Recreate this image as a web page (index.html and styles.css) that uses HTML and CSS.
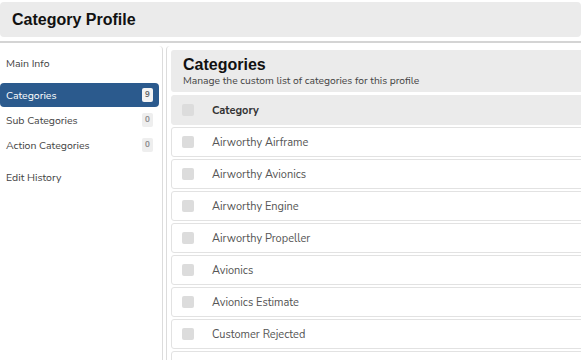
FILE: index.html
```html
<!doctype html>
<html lang="en">
  <head>
    <meta charset="UTF-8" />
    <meta name="viewport" content="width=device-width, initial-scale=1.0" />
    <title>Category Profile</title>
    <link rel="stylesheet" href="styles.css">
  </head>
  <body>
    <div class="topbar">
      <h1>Category Profile</h1>
    </div>
    <div class="divider"></div>
    <div class="layout">
      <div class="sidebar">
        <div class="nav-group">
          <div class="nav-item">Main Info</div>
        </div>
        <div class="nav-group">
          <div class="nav-item active">Categories <span class="badge">9</span></div>
          <div class="nav-item">Sub Categories <span class="badge">0</span></div>
          <div class="nav-item">Action Categories <span class="badge">0</span></div>
        </div>
        <div class="nav-group">
          <div class="nav-item">Edit History</div>
        </div>
      </div>
      <div class="content">
        <div class="panel-head">
          <h2>Categories</h2>
          <p>Manage the custom list of categories for this profile</p>
        </div>
        <div class="row head">
          <span class="check"></span>
          <span>Category</span>
        </div>
        <div class="row"><span class="check"></span><span>Airworthy Airframe</span></div>
        <div class="row"><span class="check"></span><span>Airworthy Avionics</span></div>
        <div class="row"><span class="check"></span><span>Airworthy Engine</span></div>
        <div class="row"><span class="check"></span><span>Airworthy Propeller</span></div>
        <div class="row"><span class="check"></span><span>Avionics</span></div>
        <div class="row"><span class="check"></span><span>Avionics Estimate</span></div>
        <div class="row"><span class="check"></span><span>Customer Rejected</span></div>
        <div class="row"><span class="check"></span></div>
      </div>
    </div>
  </body>
</html>
```

FILE: styles.css
```css
body {
  font-family: "Nunito Sans", Lato, "Open Sans", sans-serif;
  margin: 0;
  background-color: #fff;
  color: #444;
  overflow: hidden;
  height: 360px;
}
.topbar {
  margin-top: 2px;
  height: 35px;
  background-color: #ebebeb;
  border-radius: 4px;
  display: flex;
  align-items: center;
  padding-left: 12px;
}
h1 {
  margin: 0;
  font-family: "Liberation Sans", Arial, sans-serif;
  font-size: 16px;
  font-weight: bold;
  color: #111;
}
.divider {
  margin-top: 4px;
  border-top: 2px solid #d4d4d4;
}
.layout {
  display: flex;
  margin-top: 3px;
  height: 320px;
}
.sidebar {
  width: 162px;
  flex-shrink: 0;
  border-right: 1px solid #dcdcdc;
  border-top-right-radius: 4px;
  padding-top: 5px;
}
.nav-group {
  margin-bottom: 8px;
}
.nav-item {
  display: flex;
  align-items: center;
  justify-content: space-between;
  height: 24px;
  width: 147px;
  padding: 0 6px;
  margin-bottom: 1px;
  font-size: 10.5px;
  color: #444;
  border-radius: 4px;
}
.nav-item.active {
  background-color: #2b5a8d;
  color: #fff;
}
.badge {
  font-size: 8px;
  font-weight: bold;
  color: #888;
  background-color: #eee;
  border-radius: 2px;
  padding: 3px 3px;
  min-width: 5px;
  line-height: 8px;
  text-align: center;
}
.nav-item.active .badge {
  background-color: #f4f4f4;
  color: #666;
}
.content {
  flex-grow: 1;
  margin-left: 3px;
  margin-right: -12px;
  border-left: 1px solid #dcdcdc;
  border-top-left-radius: 4px;
  padding: 4px 0 0 4px;
}
.panel-head {
  background-color: #ebebeb;
  border-radius: 3px;
  height: 42px;
  padding-left: 12px;
  box-sizing: border-box;
  padding-top: 7px;
  margin-bottom: 3px;
}
h2 {
  margin: 0;
  font-family: "Liberation Sans", Arial, sans-serif;
  font-size: 16px;
  font-weight: bold;
  color: #111;
  line-height: 16px;
}
.panel-head p {
  margin: 1px 0 0;
  font-size: 10.3px;
  color: #444;
}
.row {
  display: flex;
  align-items: center;
  height: 30px;
  box-sizing: border-box;
  border: 1px solid #e2e2e2;
  border-radius: 3px;
  margin-bottom: 2px;
  padding-left: 10px;
  font-size: 11px;
  color: #555;
}
.row.head {
  background-color: #ebebeb;
  border-color: #ebebeb;
  font-weight: bold;
  color: #333;
}
.check {
  width: 12px;
  height: 12px;
  background-color: #dcdcdc;
  border-radius: 2px;
  margin-right: 18px;
}
```
